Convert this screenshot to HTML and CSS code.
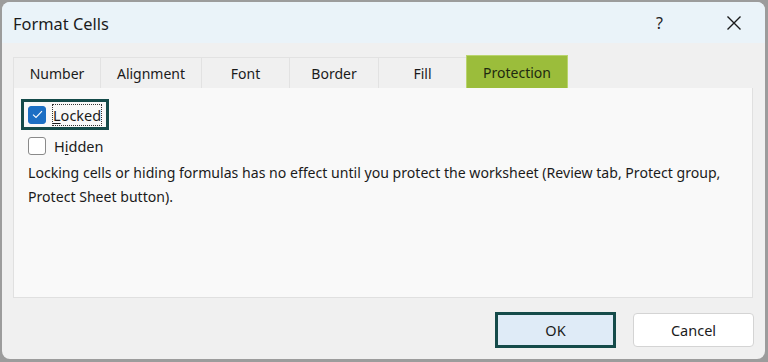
FILE: index.html
```html
<!DOCTYPE html>
<html>
<head>
<meta charset="utf-8">
<link rel="stylesheet" href="styles.css">
</head>
<body>
<div class="window">
  <div class="titlebar">
    <span class="title">Format Cells</span>
    <span class="help">?</span>
    <span class="close">
      <svg width="16" height="16" viewBox="0 0 16 16"><path d="M1.5 1.5 L14.5 14.5 M14.5 1.5 L1.5 14.5" stroke="#1a1a1a" stroke-width="1.4" fill="none"/></svg>
    </span>
  </div>
  <div class="tabs">
    <div class="tab t-number">Number</div>
    <div class="tab t-align">Alignment</div>
    <div class="tab t-font">Font</div>
    <div class="tab t-border">Border</div>
    <div class="tab t-fill">Fill</div>
    <div class="tab active t-prot">Protection</div>
  </div>
  <div class="panel">
    <div class="focusbox">
      <span class="check checked">
        <svg width="11" height="9" viewBox="0 0 11 9"><path d="M1 4.6 L4 7.4 L10 1.2" stroke="#ffffff" stroke-width="1.1" fill="none"/></svg>
      </span>
      <span class="label dotted"><u>L</u>ocked</span>
    </div>
    <div class="row">
      <span class="check"></span>
      <span class="label">H<u>i</u>dden</span>
    </div>
    <p class="desc">Locking cells or hiding formulas has no effect until you protect the worksheet (Review tab, Protect group, Protect Sheet button).</p>
  </div>
  <div class="buttons">
    <div class="btn ok">OK</div>
    <div class="btn cancel">Cancel</div>
  </div>
</div>
</body>
</html>
```
FILE: styles.css
```css
html, body {
  margin: 0;
  padding: 0;
}
body {
  width: 768px;
  height: 362px;
  background: #9c9c9c;
  font-family: "Noto Sans", "Open Sans", sans-serif;
  color: #1b1b1b;
  overflow: hidden;
}
.window {
  margin: 2px 3px 0 2px;
  width: 763px;
  height: 357px;
  background: #f0f0f0;
  border-radius: 8px;
  overflow: hidden;
  display: flex;
  flex-direction: column;
}
.titlebar {
  height: 41px;
  background: #eaf3f9;
  display: flex;
  align-items: center;
  padding-left: 11px;
  flex: none;
}
.title {
  font-size: 16.4px;
  flex: 1;
  padding-top: 1px;
}
.help {
  font-size: 16px;
  width: 20px;
  margin-right: 50px;
  color: #222;
}
.close {
  width: 16px;
  height: 16px;
  margin-right: 23px;
  display: flex;
}
.tabs {
  display: flex;
  margin-top: 12px;
  padding-left: 11px;
  height: 33px;
  align-items: flex-end;
}
.tab {
  height: 31px;
  box-sizing: border-box;
  border: 1px solid #e2e2e2;
  border-bottom: none;
  border-right: none;
  font-size: 14px;
  display: flex;
  align-items: center;
  justify-content: center;
  color: #1b1b1b;
}
.t-number { width: 87px; }
.t-align { width: 101px; }
.t-font { width: 88px; }
.t-border { width: 89px; }
.t-fill { width: 88px; }
.t-prot {
  width: 102px;
  height: 33px;
  background: #9bbd3b;
  border: 1px solid #b9d46d;
  border-bottom: none;
  color: #1e2a10;
}
.panel {
  margin: 0 12px 0 11px;
  height: 210px;
  background: #f9f9f9;
  border: 1px solid #e0e0e0;
  border-top: none;
  box-sizing: border-box;
  padding: 11px 0 0 7px;
  flex: none;
}
.focusbox {
  display: inline-flex;
  align-items: center;
  border: 3px solid #154b4a;
  height: 31px;
  box-sizing: border-box;
  padding: 0 4px 0 4px;
  margin-left: 0;
}
.row {
  display: flex;
  align-items: center;
  height: 24px;
  margin-top: 4px;
  padding-left: 7px;
}
.check {
  width: 18px;
  height: 18px;
  box-sizing: border-box;
  border: 1px solid #8a8a8a;
  border-radius: 3px;
  background: #ffffff;
  display: inline-flex;
  align-items: center;
  justify-content: center;
  flex: none;
}
.check.checked {
  background: #1c6fc4;
  border-color: #1c6fc4;
}
.label {
  font-size: 14.5px;
  margin-left: 8px;
  line-height: 22px;
}
.dotted {
  outline: 1px dotted #333;
  outline-offset: -1px;
  padding: 0 1px;
  margin-left: 6px;
}
.label u {
  text-decoration-thickness: 1px;
  text-underline-offset: 2px;
}
.desc {
  margin: 3px 0 0 7px;
  font-size: 14.1px;
  line-height: 24px;
  width: 715px;
}
.buttons {
  display: flex;
  justify-content: flex-end;
  align-items: center;
  padding-right: 11px;
  margin-top: 14px;
  gap: 17px;
}
.btn {
  width: 121px;
  box-sizing: border-box;
  display: flex;
  align-items: center;
  justify-content: center;
  font-size: 14.5px;
}
.ok {
  height: 36px;
  background: #dfebf7;
  border: 3px solid #154b4a;
}
.cancel {
  height: 34px;
  background: #ffffff;
  border: 1px solid #d4d4d4;
  border-radius: 4px;
}
```
